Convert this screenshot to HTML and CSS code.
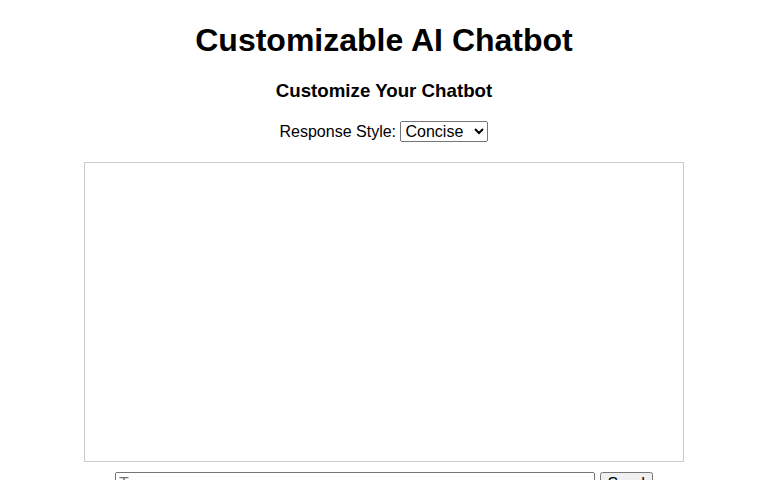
FILE: index.html
```html
<!DOCTYPE html>
<html lang="en">
<head>
<meta charset="utf-8">
<title>Customizable AI Chatbot</title>
<link rel="stylesheet" href="styles.css">
</head>
<body>
  <h1>Customizable AI Chatbot</h1>
  <h3>Customize Your Chatbot</h3>
  <div class="settings">
    <label for="style">Response Style:</label>
    <select id="style" class="control style-select">
      <option>Concise</option>
      <option>Detailed</option>
      <option>Friendly</option>
    </select>
  </div>
  <div class="chat-box"></div>
  <div class="input-row">
    <input type="text" class="message control" placeholder="Type your message...">
    <button class="send control">Send</button>
  </div>
</body>
</html>
```

FILE: styles.css
```css
body {
  font-family: "Liberation Sans", Arial, sans-serif;
  text-align: center;
  margin: 0 8px;
}

h1 {
  margin-top: 22px;
}

.control {
  font-family: "Liberation Sans", Arial, sans-serif;
  font-size: 16px;
}

.style-select {
  padding: 0 7px 0 0;
}

.settings {
  margin: 16px 0 20px;
}

.chat-box {
  width: 600px;
  height: 300px;
  box-sizing: border-box;
  margin: 0 auto;
  border: 1px solid #ccc;
  padding: 10px;
  overflow-y: auto;
  text-align: left;
}

.input-row {
  width: 600px;
  margin: 10px auto 0;
}

.message {
  width: 80%;
  box-sizing: border-box;
}
```
